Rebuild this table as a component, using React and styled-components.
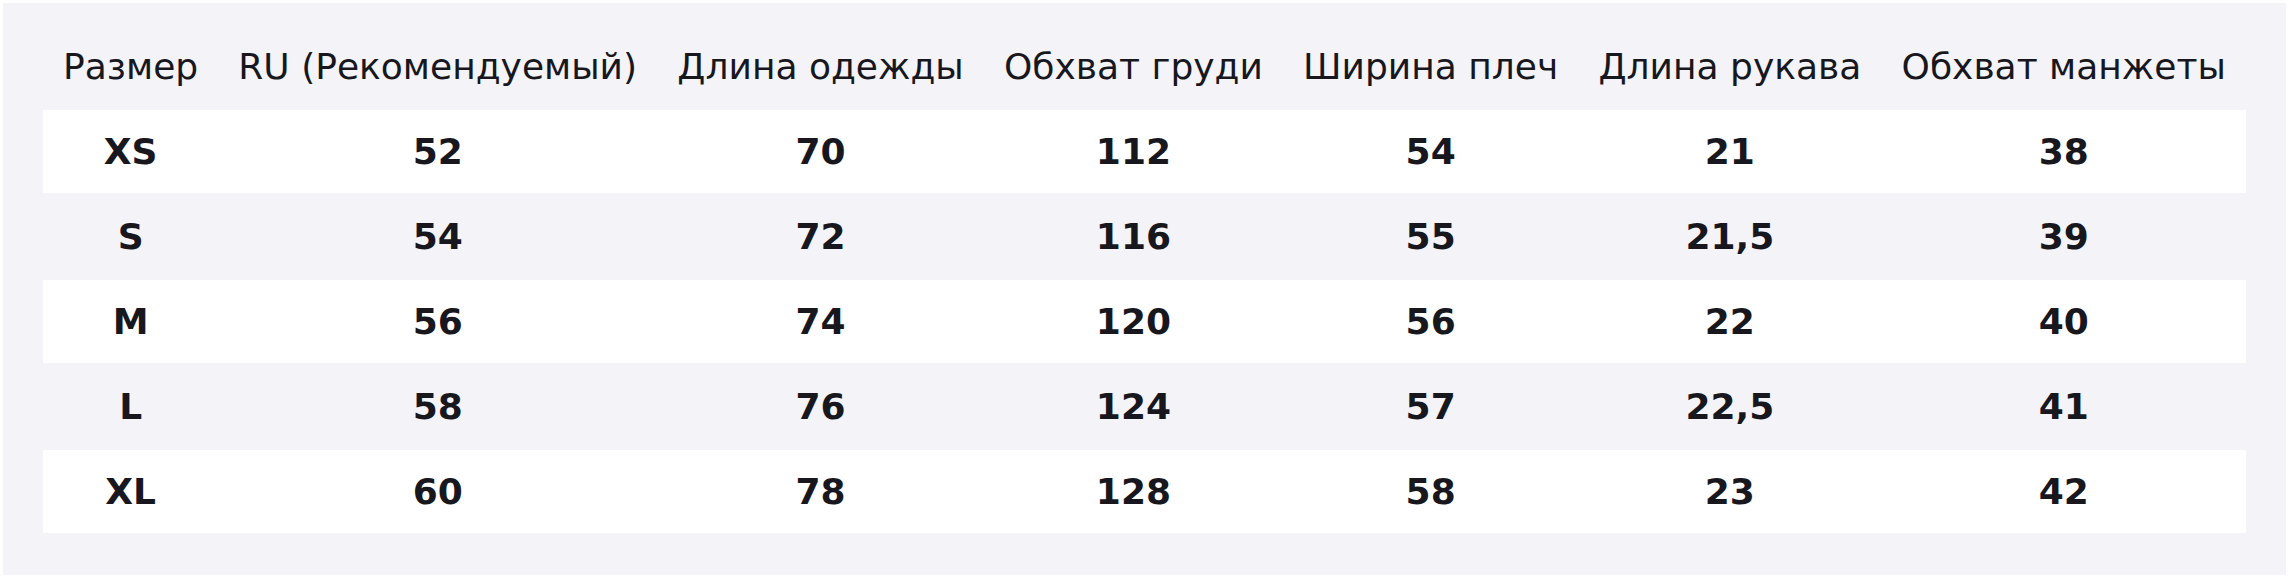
import React from "react";
import styled, { createGlobalStyle } from "styled-components";

const GlobalStyle = createGlobalStyle`
  html, body { background: #ffffff; }
  body {
    margin: 3px;
    font-family: "DejaVu Sans", "Liberation Sans", sans-serif;
    color: #17171d;
  }
`;

const Panel = styled.section`
  background: #f3f3f8;
  padding: 40px 40px 40px;
`;

const Table = styled.table`
  width: 100%;
  border-collapse: separate;
  border-spacing: 0 2px;
  font-family: "DejaVu Sans", sans-serif;
  font-size: 36px;
  line-height: 42px;
  color: #17171d;
`;

const HeadCell = styled.th`
  font-weight: 400;
  text-align: center;
  white-space: nowrap;
  padding: 1px 20px 20px;
`;

const Row = styled.tr`
  background: ${(p) => (p.$striped ? "#ffffff" : "transparent")};
`;

const Cell = styled.td`
  height: 83px;
  box-sizing: border-box;
  padding: 0 20px;
  font-weight: 700;
  text-align: center;
  vertical-align: middle;
  white-space: nowrap;
`;

const headers = [
  "Размер",
  "RU (Рекомендуемый)",
  "Длина одежды",
  "Обхват груди",
  "Ширина плеч",
  "Длина рукава",
  "Обхват манжеты",
];

const rows = [
  ["XS", "52", "70", "112", "54", "21", "38"],
  ["S", "54", "72", "116", "55", "21,5", "39"],
  ["M", "56", "74", "120", "56", "22", "40"],
  ["L", "58", "76", "124", "57", "22,5", "41"],
  ["XL", "60", "78", "128", "58", "23", "42"],
];

export default function App() {
  return (
    <>
      <GlobalStyle />
      <Panel>
        <Table>
          <thead>
            <tr>
              {headers.map((h) => (
                <HeadCell key={h}>{h}</HeadCell>
              ))}
            </tr>
          </thead>
          <tbody>
            {rows.map((r, i) => (
              <Row key={r[0]} $striped={i % 2 === 0}>
                {r.map((c, j) => (
                  <Cell key={j}>{c}</Cell>
                ))}
              </Row>
            ))}
          </tbody>
        </Table>
      </Panel>
    </>
  );
}
